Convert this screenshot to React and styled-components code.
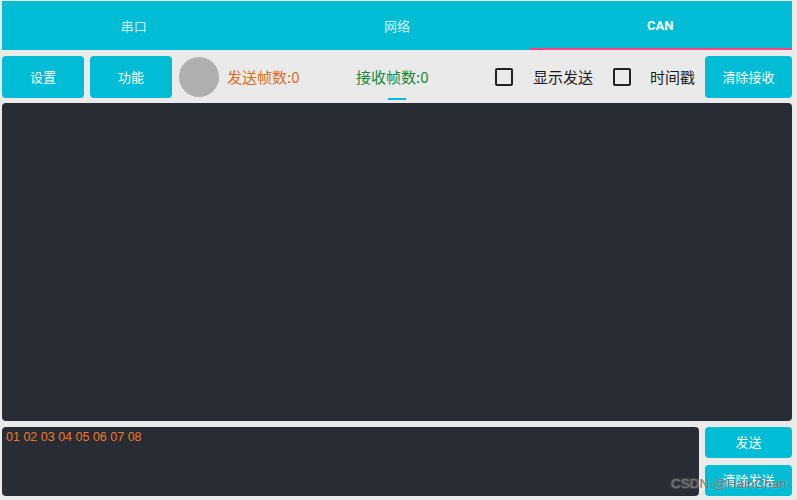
import React from "react";
import styled, { createGlobalStyle } from "styled-components";

const cyan = "#00bcd4";
const dark = "#282c34";

const GlobalStyle = createGlobalStyle`
  html, body {
    margin: 0;
    padding: 0;
    background: #eaeaea;
  }
  body {
    font-family: "Noto Sans CJK SC", "Noto Sans", sans-serif;
  }
`;

const Page = styled.div`
  position: relative;
  width: 797px;
  height: 500px;
  box-sizing: border-box;
  padding: 1px 5px 4px 2px;
  display: flex;
  flex-direction: column;
  overflow: hidden;
`;

const TabBar = styled.div`
  height: 49px;
  background: ${cyan};
  display: flex;
  flex-shrink: 0;
`;

const Tab = styled.div`
  flex: 1;
  display: flex;
  align-items: center;
  justify-content: center;
  font-size: 13px;
  color: ${(p) => (p.active ? "#ffffff" : "#d4f1f6")};
  font-family: ${(p) =>
    p.latin ? '"Roboto", "Liberation Sans", sans-serif' : '"Noto Sans CJK SC", sans-serif'};
  font-weight: ${(p) => (p.active ? 700 : 400)};
  border-bottom: 2px solid ${(p) => (p.active ? "#ff4081" : "transparent")};
  box-sizing: border-box;
  padding-top: 2px;
`;

const Toolbar = styled.div`
  position: relative;
  margin-top: 6px;
  height: 42px;
  display: flex;
  align-items: center;
  flex-shrink: 0;
`;

const Button = styled.button`
  width: ${(p) => p.w || 82}px;
  height: ${(p) => p.h || 42}px;
  margin-left: ${(p) => p.ml || 0}px;
  border: none;
  border-radius: 4px;
  background: ${cyan};
  color: #ffffff;
  font-family: "Noto Sans CJK SC", sans-serif;
  font-size: 13px;
  line-height: 1;
  padding: 0 0 2px;
  flex-shrink: 0;
`;

const Lamp = styled.div`
  width: 40px;
  height: 40px;
  border-radius: 50%;
  background: #afafaf;
  margin-left: 7px;
  flex-shrink: 0;
`;

const Stat = styled.div`
  width: ${(p) => p.w}px;
  margin-left: ${(p) => p.ml || 0}px;
  font-size: 15px;
  line-height: 1;
  padding-bottom: 2px;
  color: ${(p) => p.color};
  white-space: nowrap;
  flex-shrink: 0;
`;

const Spacer = styled.div`
  flex: 1;
`;

const Check = styled.span`
  width: 14px;
  height: 14px;
  border: 2px solid #222222;
  border-radius: 2px;
  margin-left: ${(p) => p.ml || 0}px;
  flex-shrink: 0;
`;

const Label = styled.span`
  margin-left: ${(p) => p.ml || 0}px;
  font-size: 15px;
  line-height: 1;
  padding-bottom: 2px;
  color: #1a1a1a;
  white-space: nowrap;
`;

const ScrollMark = styled.div`
  position: absolute;
  left: 386px;
  bottom: -2px;
  width: 18px;
  height: 2px;
  background: ${cyan};
`;

const Console = styled.div`
  margin-top: 5px;
  height: 318px;
  background: ${dark};
  border-radius: 4px;
  flex-shrink: 0;
`;

const Bottom = styled.div`
  margin-top: 6px;
  height: 69px;
  display: flex;
  gap: 6px;
`;

const SendBox = styled.div`
  flex: 1;
  background: ${dark};
  border-radius: 4px;
  padding: 3px 4px;
  box-sizing: border-box;
  color: #f07a1e;
  font-family: "Liberation Sans", sans-serif;
  font-size: 12.5px;
  line-height: 14px;
`;

const ButtonColumn = styled.div`
  width: 87px;
  display: flex;
  flex-direction: column;
  justify-content: space-between;
`;

const Watermark = styled.div`
  position: absolute;
  left: 671px;
  top: 476px;
  font-family: "Liberation Sans", sans-serif;
  font-size: 13.5px;
  color: #6f6f6f;
  text-shadow: 0 0 2px rgba(255, 255, 255, 0.55);
  pointer-events: none;
  white-space: nowrap;
`;

export default function App() {
  return (
    <>
      <GlobalStyle />
      <Page>
        <TabBar>
          <Tab>串口</Tab>
          <Tab>网络</Tab>
          <Tab active latin>
            CAN
          </Tab>
        </TabBar>
        <Toolbar>
          <Button>设置</Button>
          <Button ml={6}>功能</Button>
          <Lamp />
          <Stat w={129} ml={8} color="#dd6d24">
            发送帧数:0
          </Stat>
          <Stat w={100} color="#11893b">
            接收帧数:0
          </Stat>
          <Spacer />
          <Check />
          <Label ml={20}>显示发送</Label>
          <Check ml={20} />
          <Label ml={19}>时间戳</Label>
          <Button w={87} ml={10}>
            清除接收
          </Button>
          <ScrollMark />
        </Toolbar>
        <Console />
        <Bottom>
          <SendBox>01 02 03 04 05 06 07 08</SendBox>
          <ButtonColumn>
            <Button w={87} h={31}>
              发送
            </Button>
            <Button w={87} h={31}>
              清除发送
            </Button>
          </ButtonColumn>
        </Bottom>
        <Watermark>CSDN @HainChan</Watermark>
      </Page>
    </>
  );
}
